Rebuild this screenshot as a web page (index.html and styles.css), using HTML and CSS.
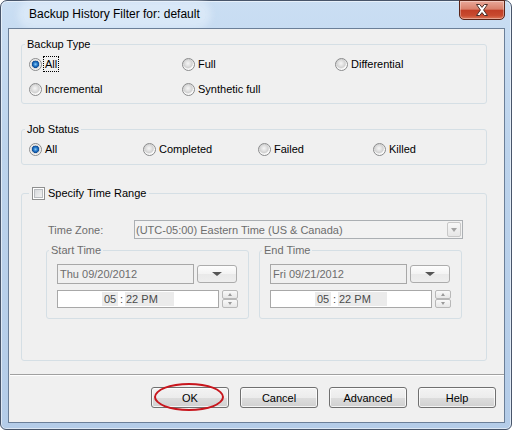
FILE: index.html
```html
<!DOCTYPE html>
<html>
<head>
<meta charset="utf-8">
<title>Backup History Filter</title>
<link rel="stylesheet" href="styles.css">
</head>
<body>
<div class="window">
  <div class="titlebar">
    <span class="title">Backup History Filter for: default</span>
    <div class="close">
      <svg width="14" height="12" viewBox="0 0 14 12"><path d="M1.5,0.5 h3.2 l2.3,2.9 l2.3,-2.9 h3.2 l-3.9,5.5 l3.9,5.5 h-3.2 l-2.3,-2.9 l-2.3,2.9 h-3.2 l3.9,-5.5 z" fill="#fff" stroke="#4a2f2a" stroke-width="1" stroke-linejoin="round"/></svg>
    </div>
  </div>
  <div class="client">
    <fieldset class="group">
      <legend>Backup Type</legend>
      <div class="opts type">
        <label class="opt"><span class="radio on"></span><span class="focus">All</span></label>
        <label class="opt"><span class="radio"></span><span>Full</span></label>
        <label class="opt"><span class="radio"></span><span>Differential</span></label>
        <label class="opt"><span class="radio"></span><span>Incremental</span></label>
        <label class="opt"><span class="radio"></span><span>Synthetic full</span></label>
      </div>
    </fieldset>
    <fieldset class="group status-group">
      <legend>Job Status</legend>
      <div class="opts status">
        <label class="opt"><span class="radio on"></span><span>All</span></label>
        <label class="opt"><span class="radio"></span><span>Completed</span></label>
        <label class="opt"><span class="radio"></span><span>Failed</span></label>
        <label class="opt"><span class="radio"></span><span>Killed</span></label>
      </div>
    </fieldset>
    <fieldset class="group time-group">
      <legend class="chk-legend"><span class="check"></span><span>Specify Time Range</span></legend>
      <div class="time-body">
        <div class="tz-row">
          <span class="tz-label">Time Zone:</span>
          <div class="combo"><span>(UTC-05:00) Eastern Time (US &amp; Canada)</span><span class="combo-btn"><span class="tri-sm"></span></span></div>
        </div>
        <div class="times">
          <fieldset class="sub">
            <legend>Start Time</legend>
            <div class="sub-body">
              <div class="date-row">
                <div class="datebox">Thu 09/20/2012</div>
                <div class="ddbtn"><span class="tri"></span></div>
              </div>
              <div class="time-row">
                <div class="timebox"><span class="seg h">05</span><span class="colon">:</span><span class="seg m">22 PM</span></div>
                <div class="spin"><span><i class="up"></i></span><span><i class="down"></i></span></div>
              </div>
            </div>
          </fieldset>
          <fieldset class="sub">
            <legend>End Time</legend>
            <div class="sub-body">
              <div class="date-row">
                <div class="datebox">Fri 09/21/2012</div>
                <div class="ddbtn"><span class="tri"></span></div>
              </div>
              <div class="time-row">
                <div class="timebox"><span class="seg h">05</span><span class="colon">:</span><span class="seg m">22 PM</span></div>
                <div class="spin"><span><i class="up"></i></span><span><i class="down"></i></span></div>
              </div>
            </div>
          </fieldset>
        </div>
      </div>
    </fieldset>
    <div class="sep"></div>
    <div class="buttons">
      <div class="btn-wrap"><button class="btn">OK</button><span class="ring"></span></div>
      <div class="btn-wrap"><button class="btn">Cancel</button></div>
      <div class="btn-wrap"><button class="btn">Advanced</button></div>
      <div class="btn-wrap"><button class="btn">Help</button></div>
    </div>
  </div>
</div>
</body>
</html>
```
FILE: styles.css
```css
* { box-sizing: border-box; }
html, body { margin: 0; padding: 0; background: #ffffff; }
body { font-family: "Liberation Sans", Arial, sans-serif; font-size: 11px; color: #000; }

.window {
  width: 512px; height: 430px;
  border: 1px solid #48556a;
  border-radius: 7px 7px 6px 6px;
  background: linear-gradient(180deg, #cadef3 0%, #bcd3ec 35%, #b4cce8 100%);
  box-shadow: inset 0 0 0 1px rgba(255,255,255,0.55);
  padding: 0 6px 6px 7px;
  display: flex; flex-direction: column;
}
.titlebar { height: 27px; flex: none; display: flex; align-items: center; }
.title {
  margin-left: 15px; padding: 2px 6px;
  font-size: 12px; line-height: 15px;
  border-radius: 10px;
  background: rgba(230, 240, 251, 0.55);
  box-shadow: 0 0 6px 5px rgba(230, 240, 251, 0.55);
}
.close {
  margin-left: auto; align-self: flex-start; margin-top: -1px;
  width: 46px; height: 20px;
  border: 1px solid #5a2418; border-radius: 0 0 5px 5px;
  background: linear-gradient(180deg, #e9a899 0%, #d9806b 45%, #c13e26 52%, #c84a2f 80%, #dc7658 100%);
  box-shadow: inset 0 0 0 1px rgba(255,255,255,0.35);
  display: flex; align-items: center; justify-content: center;
}
.close svg { display: block; }

.client {
  flex: 1;
  border: 1px solid #6b7f98;
  background: #f0f0f0;
  padding-top: 9px;
  display: flex; flex-direction: column;
}

fieldset { min-width: 0; }
.group {
  margin: 0 0 0 12px; padding: 0;
  width: 466px;
  border: 1px solid #d5dfe5; border-radius: 3px;
}
.group > legend { margin-left: 3px; padding: 0 2px; line-height: 13px; height: 13px; }
.status-group { margin-top: 19px; }
.time-group { margin-top: 22px; }

.opts { display: grid; row-gap: 9px; }
.opts.type { grid-template-columns: 153px 153px auto; padding: 5px 0 6px 7px; }
.opts.status { grid-template-columns: 114px 115px 115px auto; padding: 5px 0 7px 7px; }
.opt { display: flex; align-items: center; gap: 3px; height: 16px; white-space: nowrap; }
.focus { outline: 1px dotted #000; outline-offset: 0; padding: 1px 1px; margin-left: -1px; }

.radio {
  flex: none; width: 13px; height: 13px; border-radius: 50%;
  border: 1px solid #8a8b8c;
  background: radial-gradient(circle at 45% 40%, #f6f6f6 0, #e2e2e2 2.5px, #d2d2d2 4.2px, #e6e6e6 5px, #fafafa 5.5px);
}
.radio.on {
  background: radial-gradient(circle at 50% 48%, #8fd0f6 0, #2a7ccc 1.8px, #0d4c96 3.4px, #d0d0d0 3.9px, #ececec 4.8px, #fafafa 5.5px);
}

.chk-legend { margin-left: 7px !important; padding: 0 3px !important; display: flex; align-items: center; gap: 3px; }
.check {
  flex: none; width: 13px; height: 13px;
  border: 1px solid #8e8f8f;
  background: linear-gradient(135deg, #cfd2d6 0%, #eceded 70%, #f7f7f7 100%);
  box-shadow: inset 0 0 0 1px #fff, inset 0 0 0 2px #b9bcc0;
}

.time-body { padding: 20px 0 41px 24px; }
.tz-row { display: flex; align-items: center; height: 19px; padding-left: 2px; }
.tz-label { width: 86px; color: #6d6d6d; }
.combo {
  width: 329px; height: 19px;
  border: 1px solid #abafb3;
  background: #f2f2f2; color: #6d6d6d;
  display: flex; align-items: center; padding: 0 1px 0 1px;
  white-space: nowrap;
}
.combo-btn {
  margin-left: auto; width: 14px; height: 15px;
  border: 1px solid #c8c8c8; border-radius: 2px;
  background: linear-gradient(#f8f8f8, #e6e6e6);
  display: flex; align-items: center; justify-content: center;
}
.tri-sm { width: 0; height: 0; border-left: 3.5px solid transparent; border-right: 3.5px solid transparent; border-top: 4px solid #a3a3a3; }

.times { display: flex; gap: 10px; margin-top: 5px; }
.sub { width: 203px; margin: 0; padding: 0; border: 1px solid #d5dfe5; border-radius: 3px; }
.sub > legend { margin-left: 2px; padding: 0 2px; line-height: 13px; height: 13px; color: #6d6d6d; }
.sub-body { padding: 7px 0 10px 10px; }
.date-row { display: flex; align-items: center; gap: 3px; }
.datebox {
  width: 137px; height: 20px;
  border: 1px solid #a8a8a8; background: #f0f0f0; color: #6d6d6d;
  padding-left: 2px; display: flex; align-items: center;
}
.ddbtn {
  width: 40px; height: 18px;
  border: 1px solid #acacac; border-radius: 3px;
  background: linear-gradient(#fdfdfd 0%, #f3f3f3 50%, #e9e9e9 51%, #eeeeee 100%);
  display: flex; align-items: center; justify-content: center;
}
.tri { width: 0; height: 0; border-left: 5px solid transparent; border-right: 5px solid transparent; border-top: 4px solid #555; }
.time-row { display: flex; align-items: center; gap: 3px; margin-top: 6px; }
.timebox {
  width: 162px; height: 18px;
  border: 1px solid #a8a8a8; background: #fff; color: #4a4a4a;
  display: flex; align-items: stretch; padding: 1px 0 1px 44px;
}
.seg { background: #ebebeb; display: flex; align-items: center; }
.seg.h { width: 16px; justify-content: center; }
.seg.m { width: 49px; padding-left: 1px; }
.colon { width: 7px; display: flex; align-items: center; justify-content: center; }
.spin { width: 16px; height: 18px; display: flex; flex-direction: column; }
.spin span {
  flex: 1; border: 1px solid #b8b8b8; border-radius: 2px;
  background: linear-gradient(#f9f9f9, #e7e7e7);
  display: flex; align-items: center; justify-content: center;
}
.spin i { display: block; width: 0; height: 0; border-left: 2.5px solid transparent; border-right: 2.5px solid transparent; }
.spin i.up { border-bottom: 3px solid #9a9a9a; }
.spin i.down { border-top: 3px solid #9a9a9a; }

.sep { margin: 13px 0 0 1px; height: 2px; border-top: 1px solid #a0a0a0; border-bottom: 1px solid #ffffff; }
.buttons { display: flex; justify-content: flex-end; gap: 11px; padding-right: 8px; margin-top: 11px; }
.btn-wrap { position: relative; }
.btn {
  display: block; width: 78px; height: 21px; padding: 0;
  font-family: inherit; font-size: 11px; font-weight: normal; color: #000;
  border: 1px solid #707070; border-radius: 3px;
  background: linear-gradient(#f3f3f3 0%, #ececec 50%, #dddddd 51%, #d0d0d0 100%);
  box-shadow: inset 0 0 0 1px rgba(255,255,255,0.75);
}
.ring {
  position: absolute; left: 3px; top: -4px;
  width: 70px; height: 28px;
  border: 2px solid #c8161d; border-radius: 50%;
  pointer-events: none;
}
```
